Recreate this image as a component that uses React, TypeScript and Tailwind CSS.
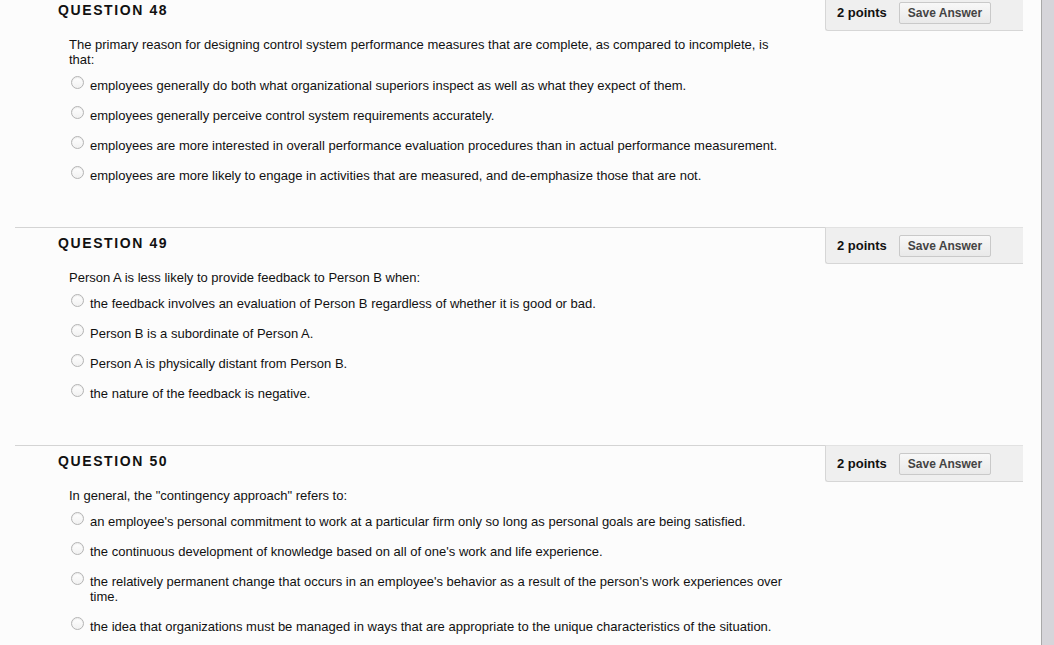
import React from 'react';

const questions = [
  {
    num: 48,
    text: "The primary reason for designing control system performance measures that are complete, as compared to incomplete, is that:",
    options: [
      "employees generally do both what organizational superiors inspect as well as what they expect of them.",
      "employees generally perceive control system requirements accurately.",
      "employees are more interested in overall performance evaluation procedures than in actual performance measurement.",
      "employees are more likely to engage in activities that are measured, and de-emphasize those that are not.",
    ],
  },
  {
    num: 49,
    text: "Person A is less likely to provide feedback to Person B when:",
    options: [
      "the feedback involves an evaluation of Person B regardless of whether it is good or bad.",
      "Person B is a subordinate of Person A.",
      "Person A is physically distant from Person B.",
      "the nature of the feedback is negative.",
    ],
  },
  {
    num: 50,
    text: 'In general, the "contingency approach" refers to:',
    options: [
      "an employee's personal commitment to work at a particular firm only so long as personal goals are being satisfied.",
      "the continuous development of knowledge based on all of one's work and life experience.",
      "the relatively permanent change that occurs in an employee's behavior as a result of the person's work experiences over time.",
      "the idea that organizations must be managed in ways that are appropriate to the unique characteristics of the situation.",
    ],
  },
];

const Radio = () => (
  <span className="mt-[-2px] h-[13px] w-[13px] shrink-0 rounded-full border border-[#b4b4b4] bg-gradient-to-b from-[#ffffff] to-[#f1f1f1] shadow-[inset_0_1px_1px_rgba(0,0,0,0.08)]" />
);

const QuestionBlock = ({ q }: { q: (typeof questions)[number] }) => (
  <div className="flex">
    <div className="ml-[15px] w-[810px] border-t border-[#d4d4d4] pb-[44px] pr-[38px]">
      <h3 className="pl-[43px] pt-[6px] text-[14px] font-bold leading-[18px] tracking-[1.6px] text-[#111]">
        QUESTION {q.num}
      </h3>
      <p className="mt-[18px] pl-[54px] text-[13px] leading-[15px] text-[#111]">{q.text}</p>
      <ul className="mt-[11px] flex flex-col gap-[15px] pl-[56px]">
        {q.options.map((o, i) => (
          <li key={i} className="flex items-start gap-[6px] text-[13px] leading-[15px] text-[#111]">
            <Radio />
            <span>{o}</span>
          </li>
        ))}
      </ul>
    </div>
    <div className="flex h-[37px] w-[198px] items-center rounded-bl-[3px] border-b border-l border-t border-[#d6d6d6] border-t-[#e2e2e2] bg-[#efefef] pl-[11px]">
      <span className="w-[62px] text-[13px] font-bold text-[#111]">2 points</span>
      <button className="h-[22px] w-[92px] rounded-[2px] border border-[#c9c9c9] bg-gradient-to-b from-[#f8f8f8] to-[#e9e9e9] text-[12px] font-bold text-[#444]">
        Save Answer
      </button>
    </div>
  </div>
);

export default function App() {
  return (
    <div
      className="flex h-[645px] w-[1054px] overflow-hidden bg-[#fcfcfc]"
      style={{ fontFamily: '"Liberation Sans", Arial, sans-serif' }}
    >
      <div className="w-[1041px] shrink-0">
        <div className="-mt-[6px]">
          {questions.map((q) => (
            <QuestionBlock key={q.num} q={q} />
          ))}
        </div>
      </div>
      <div className="w-[13px] shrink-0 border-l border-[#a9a9a9] bg-[#d6d5da]" />
    </div>
  );
}
